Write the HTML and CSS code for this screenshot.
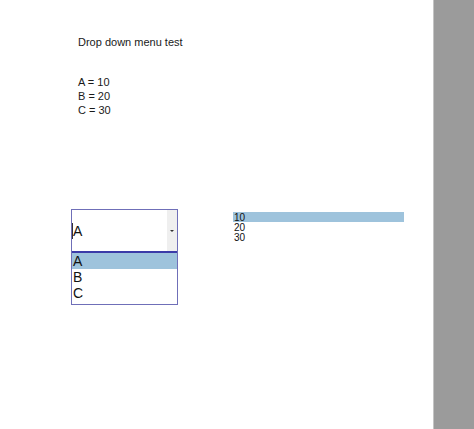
FILE: index.html
```html
<!DOCTYPE html>
<html>
<head>
<meta charset="utf-8">
<link rel="stylesheet" href="styles.css">
</head>
<body>
<div class="page">
  <div class="main">
    <div class="title">Drop down menu test</div>
    <div class="values">
      <div>A = 10</div>
      <div>B = 20</div>
      <div>C = 30</div>
    </div>
    <div class="row">
      <div class="dropdown">
        <div class="select">
          <div class="value"><span class="caret"></span>A</div>
          <div class="button"><span class="arrow"></span></div>
        </div>
        <div class="sep"></div>
        <div class="options">
          <div class="opt sel">A</div>
          <div class="opt">B</div>
          <div class="opt">C</div>
        </div>
      </div>
      <div class="numlist">
        <div class="num sel">10</div>
        <div class="num">20</div>
        <div class="num">30</div>
      </div>
    </div>
  </div>
  <div class="side"></div>
</div>
</body>
</html>
```
FILE: styles.css
```css
html, body {
  margin: 0;
  padding: 0;
  background: #ffffff;
}
.page {
  display: flex;
  width: 474px;
  height: 429px;
}
.main {
  flex: 1;
  font-family: "Liberation Sans", Arial, sans-serif;
  color: #1a1a1a;
}
.side {
  width: 40px;
  background: #9b9b9b;
  border-left: 1px solid #c4c4c4;
}
.title {
  margin: 35px 0 0 78px;
  font-size: 11px;
  line-height: 14px;
}
.values {
  margin: 26px 0 0 78px;
  font-size: 11px;
  line-height: 14px;
}
.row {
  display: flex;
  align-items: flex-start;
  margin: 92px 0 0 71px;
  gap: 55px;
}
.dropdown {
  width: 105px;
  border: 1px solid #6f6fb8;
}
.select {
  display: flex;
  height: 41px;
}
.value {
  flex: 1;
  display: flex;
  align-items: center;
  font-size: 14px;
  color: #111;
}
.caret {
  display: inline-block;
  width: 1px;
  height: 16px;
  background: #333;
}
.button {
  width: 10px;
  background: #efefef;
  display: flex;
  align-items: center;
  justify-content: center;
}
.arrow {
  width: 0;
  height: 0;
  border-left: 2px solid transparent;
  border-right: 2px solid transparent;
  border-top: 2px solid #333;
}
.sep {
  height: 2px;
  background: #3b3ba8;
}
.options {
  padding-bottom: 3px;
}
.opt {
  height: 16px;
  line-height: 16px;
  font-size: 14px;
  padding-left: 1px;
  color: #111;
}
.opt.sel {
  background: #9ec3dc;
}
.numlist {
  width: 171px;
  margin-top: 3px;
}
.num {
  height: 10px;
  line-height: 11px;
  font-size: 10px;
  padding-left: 1px;
  color: #111;
}
.num.sel {
  background: #9ec3dc;
}
```
